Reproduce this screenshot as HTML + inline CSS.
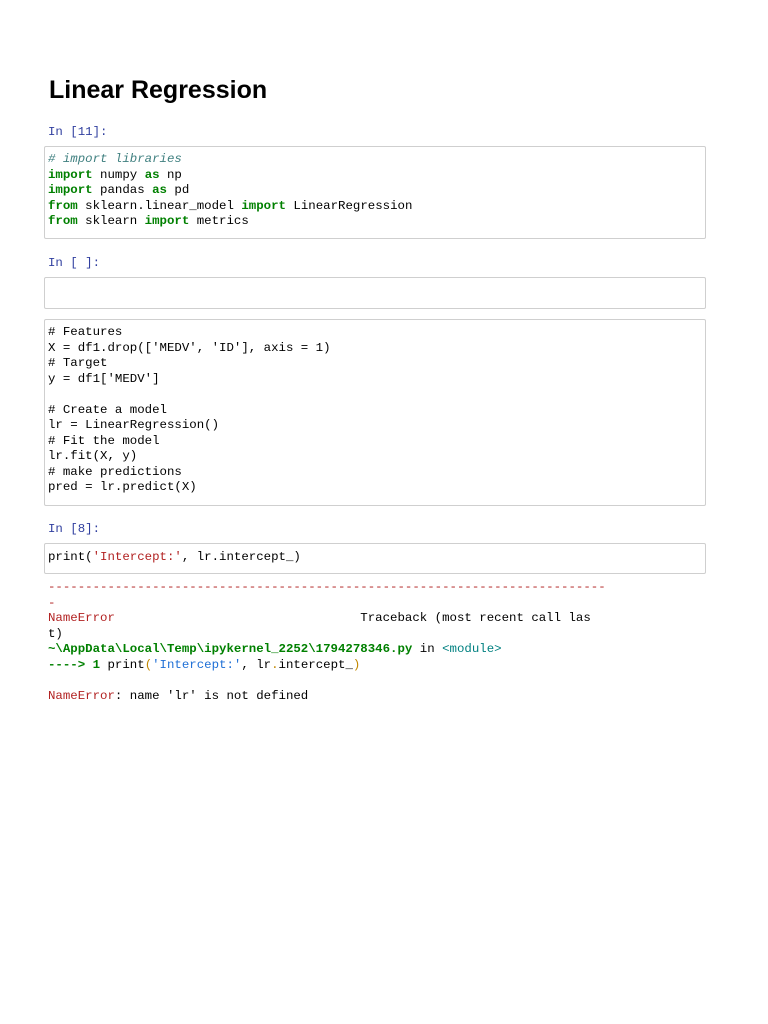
<!DOCTYPE html>
<html><head><style>
body{margin:0;background:#fff;width:768px;height:1024px;position:relative;font-family:"Liberation Sans",sans-serif}
h1{position:absolute;left:49px;top:76px;margin:0;font-size:25px;font-weight:bold;color:#000}
.p{position:absolute;left:48px;font-family:"Liberation Mono",monospace;font-size:12.4px;color:#303f9f;line-height:15.5px}
.box{position:absolute;left:44px;width:660px;border:1px solid #cfcfcf;background:#fff;border-radius:2px}
pre{margin:0;font-family:"Liberation Mono",monospace;font-size:12.4px;line-height:15.5px;color:#000;position:absolute;left:48px}
.k{color:#008000;font-weight:bold}.c{color:#408080;font-style:italic}
.r{color:#b22222}.g{color:#008000;font-weight:bold}.cy{color:#008080}.b{color:#1e6fd6}.y{color:#c28800}
</style></head><body>
<h1>Linear Regression</h1>
<div class="p" style="top:125px">In [11]:</div>
<div class="box" style="top:146px;height:91px"></div>
<pre style="top:152px"><span class="c"># import libraries</span>
<span class="k">import</span> numpy <span class="k">as</span> np
<span class="k">import</span> pandas <span class="k">as</span> pd
<span class="k">from</span> sklearn.linear_model <span class="k">import</span> LinearRegression
<span class="k">from</span> sklearn <span class="k">import</span> metrics</pre>
<div class="p" style="top:256px">In [ ]:</div>
<div class="box" style="top:277px;height:30px"></div>
<div class="box" style="top:319px;height:185px"></div>
<pre style="top:325px"># Features
X = df1.drop(['MEDV', 'ID'], axis = 1)
# Target
y = df1['MEDV']

# Create a model
lr = LinearRegression()
# Fit the model
lr.fit(X, y)
# make predictions
pred = lr.predict(X)</pre>
<div class="p" style="top:522px">In [8]:</div>
<div class="box" style="top:543px;height:29px"></div>
<pre style="top:550px">print(<span class="r">'Intercept:'</span>, lr.intercept_)</pre>
<pre style="top:580px"><span class="r">---------------------------------------------------------------------------
-
NameError</span>                                 Traceback (most recent call las
t)
<span class="g">~\AppData\Local\Temp\ipykernel_2252\1794278346.py</span> in <span class="cy">&lt;module&gt;</span>
<span class="g">----&gt; 1</span> print<span class="y">(</span><span class="b">'Intercept:'</span>, lr<span class="y">.</span>intercept_<span class="y">)</span>

<span class="r">NameError</span>: name 'lr' is not defined</pre>
</body></html>
